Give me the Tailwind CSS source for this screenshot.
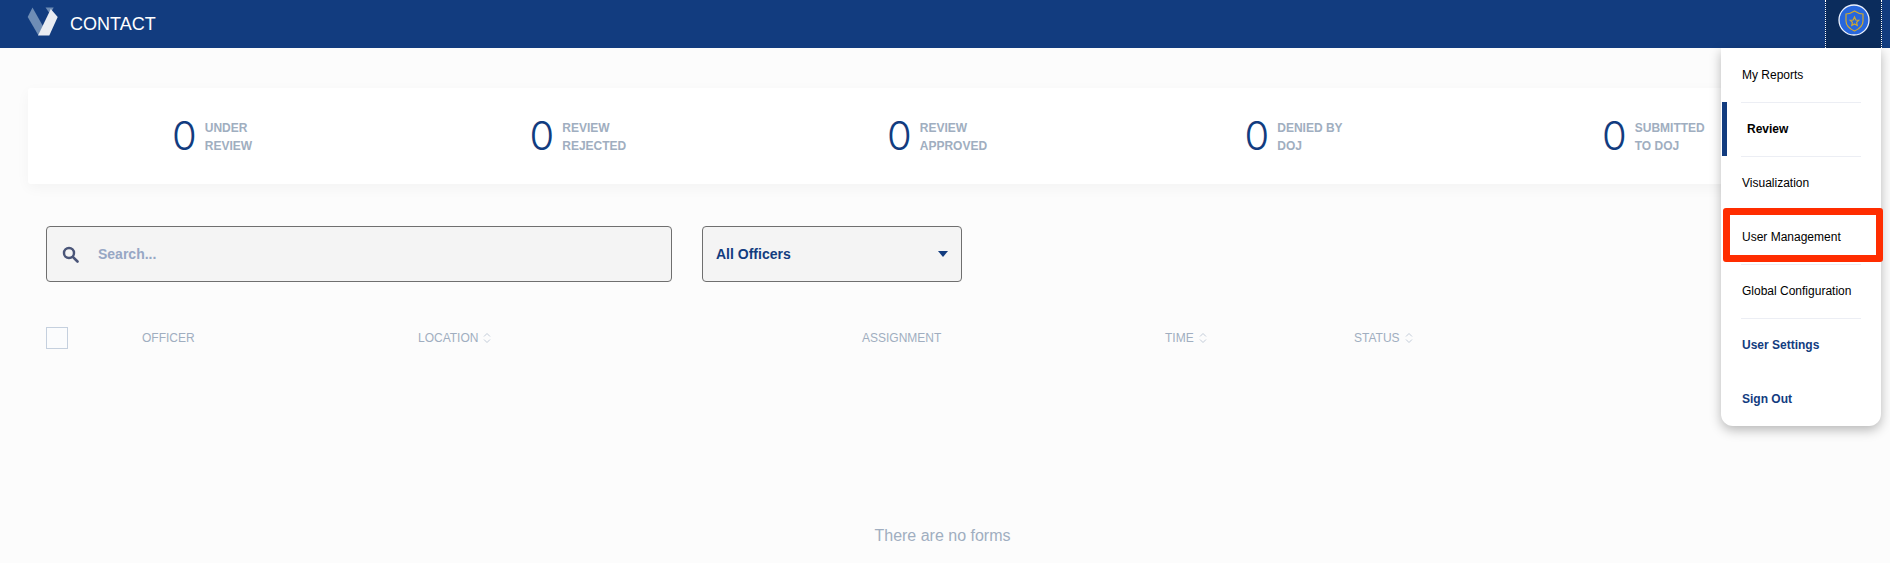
<!DOCTYPE html>
<html lang="en">
  <head>
    <meta charset="UTF-8" />
    <meta name="viewport" content="width=device-width, initial-scale=1.0" />
    <script src="https://cdn.jsdelivr.net/npm/@tailwindcss/browser@4"></script>
    <title>Contact</title>
  </head>

  <body class="font-['Liberation_Sans',sans-serif]">
    <div class="relative h-[563px] overflow-hidden bg-[#fcfcfc]">
      <header class="flex h-12 items-center justify-between bg-[#123c7f] pl-[27px] pr-2">
        <div class="flex items-center gap-3">
          <svg width="31" height="30" viewBox="0 0 31 30" class="-mt-[4px]">
            <path d="M0.7 10 L5.5 0.5 L16 19.3 L11.5 28.5 Z" fill="#6f8db5" />
            <path d="M18.5 0.5 L26.7 0.5 L23 7 Z" fill="#6f8db5" />
            <path d="M23.8 2 L30.7 10 L22.3 28.5 L11 28.5 Z" fill="#e9ecf2" />
          </svg>
          <span class="text-[18px] text-white">CONTACT</span>
        </div>
        <div class="flex h-12 w-[57px] items-center justify-center border-x border-dotted border-white bg-[#0b2c5c]">
          <svg width="32" height="32" viewBox="0 0 32 32" class="-mt-[8px]">
            <circle cx="16" cy="16" r="15" fill="#2767dd" stroke="#edf2fc" stroke-width="1.3" />
            <path d="M16.5 7 C19.5 9 22 10 25 10 V17 C25 22 21 25 16.5 27 C12 25 8 22 8 17 V10 C11 10 13.5 9 16.5 7 Z" fill="none" stroke="#d4a92a" stroke-width="1.2" />
            <path d="M16.5 13 L17.8 16 L20.8 16.3 L18.6 18.4 L19.2 21.4 L16.5 19.9 L13.8 21.4 L14.4 18.4 L12.2 16.3 L15.2 16 Z" fill="none" stroke="#d4a92a" stroke-width="1.2" />
          </svg>
        </div>
      </header>

      <main class="px-7 pt-10">
        <section class="h-24 rounded-[3px] bg-white pl-[144px] pt-[28px] shadow-[0_4px_14px_rgba(0,0,0,0.04)]">
          <div class="grid grid-cols-[repeat(5,357.5px)]">
            <div class="flex items-center gap-[8px]">
              <span class="font-['Inter',sans-serif] text-[40px] font-light leading-none text-[#123c7f]">0</span>
              <span class="mt-[2px] text-[12px] font-bold leading-[18px] text-[#a0aec0]">UNDER<br />REVIEW</span>
            </div>
            <div class="flex items-center gap-[8px]">
              <span class="font-['Inter',sans-serif] text-[40px] font-light leading-none text-[#123c7f]">0</span>
              <span class="mt-[2px] text-[12px] font-bold leading-[18px] text-[#a0aec0]">REVIEW<br />REJECTED</span>
            </div>
            <div class="flex items-center gap-[8px]">
              <span class="font-['Inter',sans-serif] text-[40px] font-light leading-none text-[#123c7f]">0</span>
              <span class="mt-[2px] text-[12px] font-bold leading-[18px] text-[#a0aec0]">REVIEW<br />APPROVED</span>
            </div>
            <div class="flex items-center gap-[8px]">
              <span class="font-['Inter',sans-serif] text-[40px] font-light leading-none text-[#123c7f]">0</span>
              <span class="mt-[2px] text-[12px] font-bold leading-[18px] text-[#a0aec0]">DENIED BY<br />DOJ</span>
            </div>
            <div class="flex items-center gap-[8px]">
              <span class="font-['Inter',sans-serif] text-[40px] font-light leading-none text-[#123c7f]">0</span>
              <span class="mt-[2px] text-[12px] font-bold leading-[18px] text-[#a0aec0]">SUBMITTED<br />TO DOJ</span>
            </div>
          </div>
        </section>

        <div class="mt-[42px] flex gap-[30px] pl-[18px]">
          <div class="flex h-14 w-[626px] items-center rounded-[4px] border border-[#6f6f6f] bg-[#f4f4f4] pl-[15px]">
            <svg width="17" height="17" viewBox="0 0 17 17" fill="none" stroke="#4a5578">
              <circle cx="7" cy="7" r="5" stroke-width="2.4" />
              <path d="M10.8 10.8 L15.5 15.5" stroke-width="2.6" stroke-linecap="round" />
            </svg>
            <span class="ml-[19px] text-[14px] font-bold text-[#97a7c4]">Search...</span>
          </div>
          <div class="flex h-14 w-[260px] items-center justify-between rounded-[4px] border border-[#6f6f6f] bg-[#f4f4f4] pl-[13px] pr-[13px]">
            <span class="text-[14px] font-bold text-[#123c7f]">All Officers</span>
            <svg width="10" height="6" viewBox="0 0 10 6"><path d="M0 0 H10 L5 6 Z" fill="#123c7f" /></svg>
          </div>
        </div>

        <div class="mt-[45px] grid grid-cols-[96px_276px_444px_303px_189px_200px] items-center pl-[18px] text-[12px] text-[#a0aec0]">
          <div class="h-[22px] w-[22px] border border-[#c5d0de] bg-[#fbfcfd]"></div>
          <div>OFFICER</div>
          <div class="flex items-center gap-[5px]">
            LOCATION
            <svg width="8" height="12" viewBox="0 0 8 12" fill="none" stroke="#c3ccd9"><path d="M1 4.5 L4 1.5 L7 4.5 M1 7.5 L4 10.5 L7 7.5" /></svg>
          </div>
          <div>ASSIGNMENT</div>
          <div class="flex items-center gap-[5px]">
            TIME
            <svg width="8" height="12" viewBox="0 0 8 12" fill="none" stroke="#c3ccd9"><path d="M1 4.5 L4 1.5 L7 4.5 M1 7.5 L4 10.5 L7 7.5" /></svg>
          </div>
          <div class="flex items-center gap-[5px]">
            STATUS
            <svg width="8" height="12" viewBox="0 0 8 12" fill="none" stroke="#c3ccd9"><path d="M1 4.5 L4 1.5 L7 4.5 M1 7.5 L4 10.5 L7 7.5" /></svg>
          </div>
        </div>

        <div class="mt-[175px] pr-[5px] text-center text-[16px] text-[#a0aec0]">There are no forms</div>
      </main>

      <!-- dropdown menu -->
      <nav class="absolute left-[1721px] top-12 w-[160px] rounded-b-[12px] bg-white shadow-[0_4px_12px_rgba(0,0,0,0.28)]">
        <div class="mx-5 -mb-px flex h-[55px] items-center border-b border-[#eceef4] pl-px text-[12px] text-black">My Reports</div>
        <div class="relative mx-5 -mb-px flex h-[55px] items-center border-b border-[#eceef4] pl-[6px] text-[12px] font-bold text-black">
          Review
          <span class="absolute -left-[19px] top-0 h-[54px] w-[5px] bg-[#123c7f]"></span>
        </div>
        <div class="mx-5 -mb-px flex h-[55px] items-center border-b border-[#eceef4] pl-px text-[12px] text-black">Visualization</div>
        <div class="mx-5 -mb-px flex h-[55px] items-center border-b border-[#eceef4] pl-px text-[12px] text-black">User Management</div>
        <div class="mx-5 -mb-px flex h-[55px] items-center border-b border-[#eceef4] pl-px text-[12px] text-black">Global Configuration</div>
        <div class="mx-5 flex h-[54px] items-center pl-px text-[12px] font-bold text-[#123c7f]">User Settings</div>
        <div class="mx-5 flex h-[54px] items-center pl-px text-[12px] font-bold text-[#123c7f]">Sign Out</div>
      </nav>

      <!-- annotation box -->
      <div class="absolute left-[1723px] top-[208px] h-[54px] w-[160px] rounded-[3px] border-[7px] border-[#ff2d00]"></div>
    </div>
  </body>
</html>
